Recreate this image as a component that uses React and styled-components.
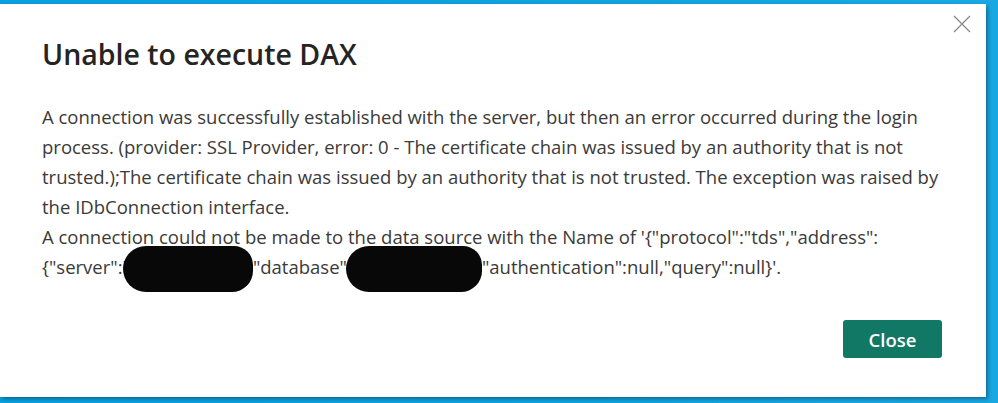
import React from 'react'
import styled, { createGlobalStyle } from 'styled-components'

const GlobalStyle = createGlobalStyle`
	html, body {
		margin: 0;
		padding: 0;
		background: #0ea2df;
	}
	body {
		width: 998px;
		height: 403px;
		overflow: hidden;
		font-family: "Segoe UI", "Open Sans", sans-serif;
	}
`

const lines = [
	'A connection was successfully established with the server, but then an error occurred during the login',
	'process. (provider: SSL Provider, error: 0 - The certificate chain was issued by an authority that is not',
	'trusted.);The certificate chain was issued by an authority that is not trusted. The exception was raised by',
	'the IDbConnection interface.',
	'A connection could not be made to the data source with the Name of \'{"protocol":"tds","address":',
]

const App = () => {
	return (
		<>
			<GlobalStyle />
			<Backdrop>
				<Dialog>
					<Header>
						<Title>Unable to execute DAX</Title>
						<CloseIcon aria-label="Close">
							<svg width="18" height="18" viewBox="0 0 18 18">
								<path d="M1 1 L17 17 M17 1 L1 17" stroke="#8a8886" strokeWidth="1.2" fill="none" />
							</svg>
						</CloseIcon>
					</Header>
					<Message>
						{ lines.map(line => (
							<Line key={line}>{ line }</Line>
						)) }
						<Line>
							{'{"server":"'}<Redacted $w={130} $ml={-7} />{'"database"'}<Redacted $w={136} $ml={-1} />{'"authentication":null,"query":null}\'.'}
						</Line>
					</Message>
					<Footer>
						<PrimaryButton>Close</PrimaryButton>
					</Footer>
				</Dialog>
			</Backdrop>
		</>
	)
}

const Backdrop = styled.div`
	width: 998px;
	height: 403px;
	padding-top: 4px;
	box-sizing: border-box;
	background: linear-gradient(90deg, #0aa0e0 0%, #10a4e0 60%, #1aa8e2 100%);
`

const Dialog = styled.div`
	width: 986px;
	height: 393px;
	background: #ffffff;
	box-shadow: 2px 2px 4px rgba(0, 0, 0, 0.35);
	box-sizing: border-box;
	padding: 30px 44px 39px 42px;
	display: flex;
	flex-direction: column;
`

const Header = styled.div`
	display: flex;
	justify-content: space-between;
	align-items: flex-start;
`

const Title = styled.h1`
	margin: 0;
	font-size: 28.5px;
	font-weight: 600;
	line-height: 40px;
	color: #252423;
`

const CloseIcon = styled.button`
	border: none;
	background: none;
	padding: 0;
	margin: -19px -29px 0 0;
	width: 18px;
	height: 18px;
	display: flex;
	cursor: pointer;
`

const Message = styled.div`
	margin-top: 28px;
	font-size: 18.5px;
	line-height: 30px;
	color: #3b3a39;
`

const Line = styled.div`
	white-space: nowrap;
`

// scribbled-out parts of the message, drawn over the neighbouring quotes
const Redacted = styled.span`
	display: inline-block;
	width: ${props => props.$w}px;
	height: 46px;
	margin: -15px 0 -15px ${props => props.$ml}px;
	vertical-align: middle;
	background: #080808;
	border-radius: 24px 20px 22px 24px;
`

const Footer = styled.div`
	margin-top: auto;
	display: flex;
	justify-content: flex-end;
`

const PrimaryButton = styled.button`
	width: 99px;
	height: 38px;
	border: none;
	border-radius: 3px;
	background: #117865;
	color: #ffffff;
	font-family: inherit;
	font-size: 18.5px;
	font-weight: 600;
	cursor: pointer;
`

export default App
